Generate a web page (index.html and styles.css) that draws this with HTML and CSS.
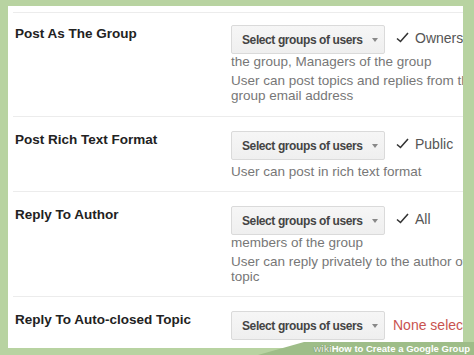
FILE: index.html
```html
<!DOCTYPE html>
<html lang="en">
<head>
  <meta charset="UTF-8">
  <meta name="viewport" content="width=device-width, initial-scale=1.0">
  <title>How to Create a Google Group</title>
  <link rel="stylesheet" href="styles.css">
</head>
<body>
  <div class="panel">
    <div class="setting">
      <div class="setting-title">Post As The Group</div>
      <div class="setting-value">
        <div class="choice">
          <button class="select-button">Select groups of users <span class="caret"></span></button>
          <svg class="check" width="13" height="11" viewBox="0 0 13 11"><path d="M1 6.5 L4.5 9.5 L12 1" fill="none" stroke="#333" stroke-width="1.6"/></svg>
          <span class="choice-label">Owners of</span>
        </div>
        <div class="choice-rest">the group, Managers of the group</div>
        <p class="setting-desc">User can post topics and replies from the<br>group email address</p>
      </div>
    </div>

    <div class="setting">
      <div class="setting-title">Post Rich Text Format</div>
      <div class="setting-value">
        <div class="choice">
          <button class="select-button">Select groups of users <span class="caret"></span></button>
          <svg class="check" width="13" height="11" viewBox="0 0 13 11"><path d="M1 6.5 L4.5 9.5 L12 1" fill="none" stroke="#333" stroke-width="1.6"/></svg>
          <span class="choice-label">Public</span>
        </div>
        <p class="setting-desc">User can post in rich text format</p>
      </div>
    </div>

    <div class="setting">
      <div class="setting-title">Reply To Author</div>
      <div class="setting-value">
        <div class="choice">
          <button class="select-button">Select groups of users <span class="caret"></span></button>
          <svg class="check" width="13" height="11" viewBox="0 0 13 11"><path d="M1 6.5 L4.5 9.5 L12 1" fill="none" stroke="#333" stroke-width="1.6"/></svg>
          <span class="choice-label">All</span>
        </div>
        <div class="choice-rest">members of the group</div>
        <p class="setting-desc">User can reply privately to the author of the<br>topic</p>
      </div>
    </div>

    <div class="setting">
      <div class="setting-title">Reply To Auto-closed Topic</div>
      <div class="setting-value">
        <div class="choice">
          <button class="select-button">Select groups of users <span class="caret"></span></button>
          <span class="choice-label none">None selected</span>
        </div>
      </div>
    </div>
  </div>

  <div class="watermark"><span class="wm-wiki">wiki</span><span class="wm-how">How</span> to Create a Google Group</div>
</body>
</html>
```

FILE: styles.css
```css
* {
  margin: 0;
  padding: 0;
  box-sizing: border-box;
}

body {
  font-family: "Liberation Sans", Arial, sans-serif;
  background: #b8d3a1;
  height: 355px;
  overflow: hidden;
  position: relative;
}

.panel {
  margin: 6px 0 0 8px;
  width: 455px;
  height: 342px;
  background: #fff;
  padding-left: 5px;
  overflow: hidden;
}

.setting {
  display: grid;
  grid-template-columns: 218px 1fr;
  border-top: 1px solid #ececec;
  padding: 14px 0 12px;
}

.setting:first-child {
  margin-top: 6px;
  padding: 12px 0 13px;
}

.setting-title {
  padding-left: 2px;
  padding-top: 1px;
  font-size: 13.5px;
  font-weight: 700;
  color: #222;
}

.setting-value {
  white-space: nowrap;
  font-size: 13.5px;
  line-height: 15px;
  color: #777;
}

.choice {
  display: flex;
  align-items: center;
  height: 29px;
}

.select-button {
  display: flex;
  align-items: center;
  width: 154px;
  height: 29px;
  padding: 0 0 0 10px;
  background: linear-gradient(#f6f6f6, #efefef);
  border: 1px solid #dadada;
  border-radius: 2px;
  font-family: "Liberation Sans", Arial, sans-serif;
  font-size: 12px;
  font-weight: 700;
  letter-spacing: -0.4px;
  color: #444;
}

.caret {
  margin-left: 9px;
  border-left: 3px solid transparent;
  border-right: 3px solid transparent;
  border-top: 4px solid #888;
}

.check {
  margin-left: 11px;
  margin-top: -4px;
}

.choice-label {
  margin-left: 6px;
  margin-top: -3px;
  font-size: 14px;
  color: #555;
}

.choice-label.none {
  margin-left: 8px;
  margin-top: 0;
  color: #c9534f;
}

.setting-desc {
  margin-top: 4px;
}

.watermark {
  position: absolute;
  right: 0;
  bottom: 0;
  width: 216px;
  height: 13px;
  padding: 1px 4px 0 0;
  background: #9ebd88;
  clip-path: polygon(46px 0, 100% 0, 100% 100%, 0 100%);
  text-align: right;
  font-size: 9.5px;
  font-weight: 700;
  color: #fff;
}

.wm-wiki {
  color: #dfe5d4;
  text-shadow: 0 0 1px #556b4a;
}

.wm-how {
  font-weight: 900;
}
```
